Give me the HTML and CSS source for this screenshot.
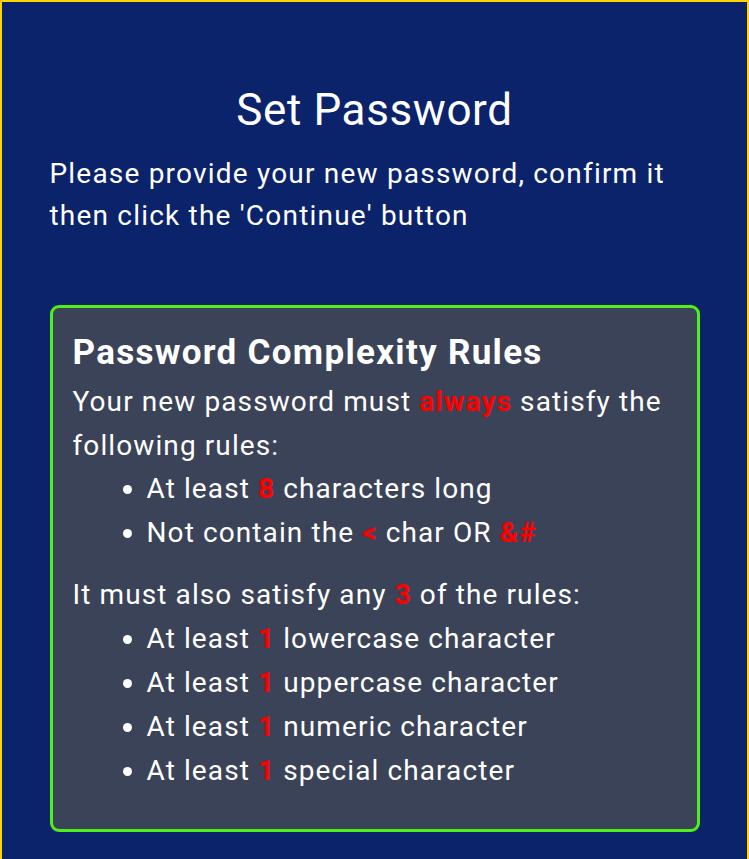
FILE: index.html
```html
<!DOCTYPE html>
<html lang="en">
<head>
<meta charset="utf-8">
<title>Set Password</title>
<link rel="stylesheet" href="styles.css">
</head>
<body>
<div class="page">
  <div class="content">
    <h1 class="title">Set Password</h1>
    <p class="intro">Please provide your new password, confirm it then click the 'Continue' button</p>
    <div class="rules">
      <h2 class="rules-title">Password Complexity Rules</h2>
      <p class="rules-text">Your new password must <b class="hl">always</b> satisfy the following rules:</p>
      <ul class="rules-list">
        <li>At least <b class="hl">8</b> characters long</li>
        <li>Not contain the <b class="hl">&lt;</b> char OR <b class="hl">&amp;#</b></li>
      </ul>
      <p class="rules-text gap">It must also satisfy any <b class="hl">3</b> of the rules:</p>
      <ul class="rules-list">
        <li>At least <b class="hl">1</b> lowercase character</li>
        <li>At least <b class="hl">1</b> uppercase character</li>
        <li>At least <b class="hl">1</b> numeric character</li>
        <li>At least <b class="hl">1</b> special character</li>
      </ul>
    </div>
  </div>
</div>
</body>
</html>
```

FILE: styles.css
```css
html, body {
  margin: 0;
  padding: 0;
  background: #0b236b;
}
body {
  font-family: Roboto, "Liberation Sans", sans-serif;
  color: #ffffff;
}
.page {
  min-height: 100vh;
  box-sizing: border-box;
  border: 2px solid #ffd400;
  border-bottom: none;
  background: #0b236b;
  padding-top: 82px;
  padding-bottom: 40px;
}
.content {
  width: 650px;
  margin: 0 auto;
}
.title {
  margin: 0;
  font-size: 44px;
  line-height: 52px;
  font-weight: 400;
  letter-spacing: 0.6px;
  text-align: center;
}
.intro {
  margin: 17px 0 0 0;
  font-size: 28px;
  line-height: 42px;
  letter-spacing: 1.2px;
}
.rules {
  margin-top: 68px;
  background: #3b4358;
  border: 3px solid #4ff01a;
  border-radius: 9px;
  padding: 23px 20px 36px 20px;
}
.rules-title {
  margin: 0 0 5px 0;
  font-size: 35px;
  line-height: 44px;
  font-weight: 700;
  letter-spacing: 1.3px;
}
.rules-text {
  margin: 0;
  font-size: 28px;
  line-height: 43.5px;
  letter-spacing: 1.1px;
}
.rules-text.gap {
  margin-top: 18px;
}
.rules-list {
  margin: 0;
  padding-left: 74px;
  font-size: 28px;
  line-height: 44px;
  letter-spacing: 1.1px;
}
.hl {
  color: #ff0000;
  font-weight: 700;
}
```
